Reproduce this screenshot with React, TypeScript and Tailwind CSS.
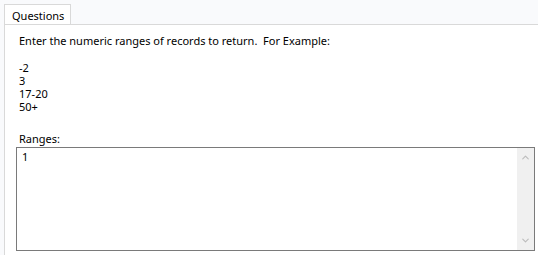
import { ChevronUp, ChevronDown } from "lucide-react";

const font = { fontFamily: '"Noto Sans", "Segoe UI", Arial, sans-serif' };

export default function App() {
  return (
    <div
      className="flex h-[255px] w-[538px] flex-col overflow-hidden bg-[#f9fafc] text-[11px] leading-[13px] text-black"
      style={font}
    >
      {/* tab strip */}
      <div className="flex h-[24px] items-end pl-[4px]">
        <div className="-mb-px flex h-[21px] w-[67px] items-center border border-b-0 border-[#d9d9d9] bg-white pl-[7px]">
          Questions
        </div>
      </div>

      {/* panel */}
      <div className="ml-[4px] flex flex-1 flex-col border-l border-t border-[#d9d9d9] bg-white pl-[11px] pr-[3px]">
        <div className="pl-[3px] pt-[9px]">
          <p>Enter the numeric ranges of records to return.&nbsp; For Example:</p>
          <div className="mt-[14px]">
            <p>-2</p>
            <p>3</p>
            <p>17-20</p>
            <p>50+</p>
          </div>
          <p className="mt-[19px]">Ranges:</p>
        </div>

        <div className="mt-[2px] flex h-[104px] border border-[#7a7a7a] bg-white">
          <div className="flex-1 pl-[5px] pt-[2px]">1</div>
          <div className="flex w-[17px] flex-col items-center justify-between bg-[#f0f0f0] py-[4px]">
            <ChevronUp size={11} strokeWidth={2.5} className="text-[#bcbcbc]" />
            <ChevronDown size={11} strokeWidth={2.5} className="text-[#bcbcbc]" />
          </div>
        </div>
      </div>
    </div>
  );
}
